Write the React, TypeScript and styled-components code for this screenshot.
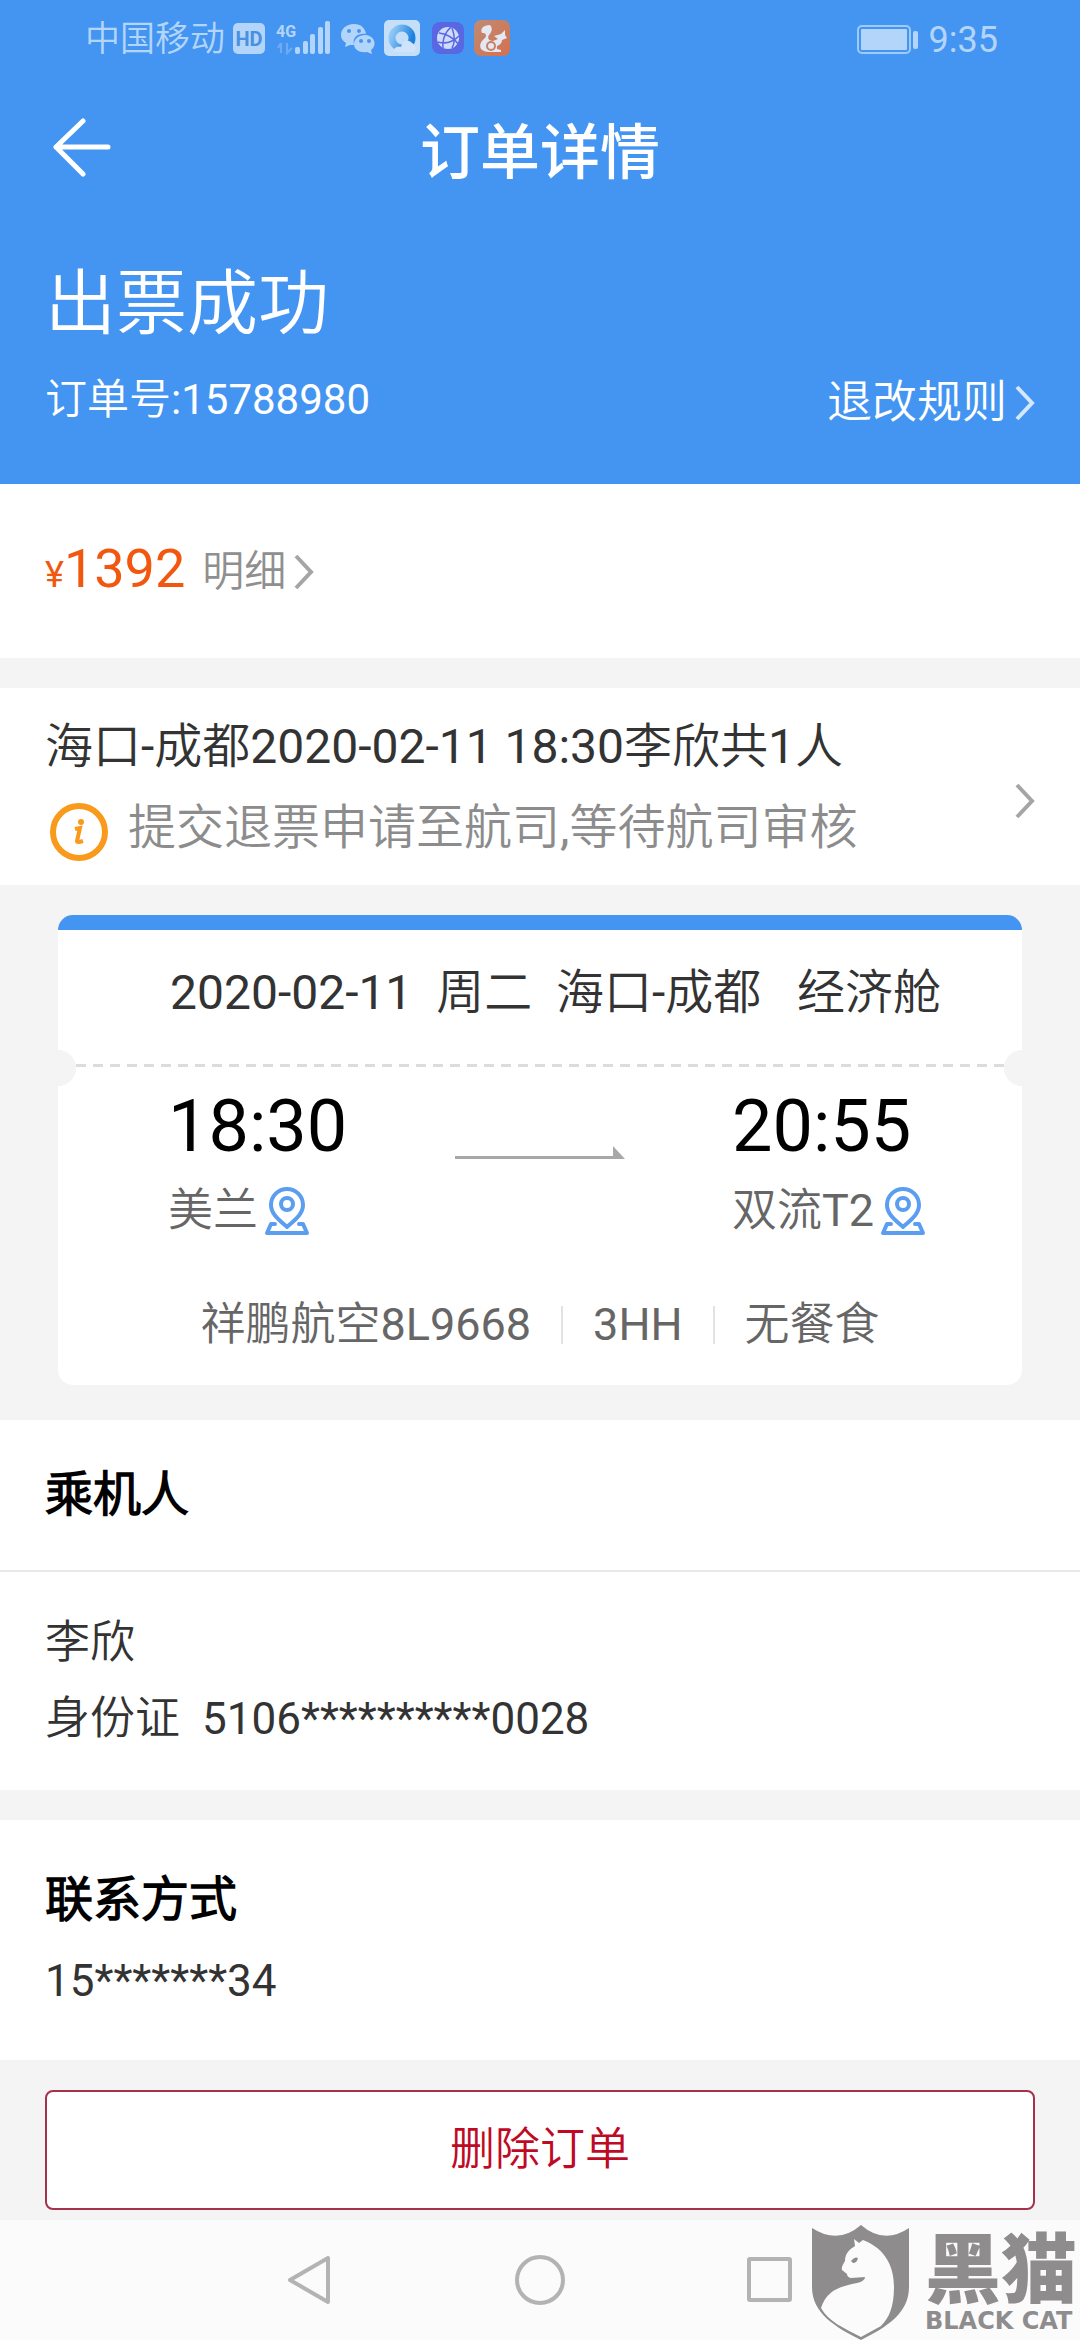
import React from 'react';
import styled, { createGlobalStyle } from 'styled-components';

const Global = createGlobalStyle`
  * { box-sizing: border-box; }
  body {
    margin: 0;
    background: #f4f4f4;
    color: #333;
    font-family: Roboto, "Noto Sans CJK SC DemiLight", "Noto Sans CJK SC", sans-serif;
    font-size: 45px;
    line-height: 60px;
  }
  h1, h2, p { margin: 0; font-weight: 400; }
  button { margin: 0; padding: 0; border: 0; background: none; color: inherit; font: inherit; cursor: pointer; }
  svg { display: block; flex: none; }
`;

const Page = styled.div`
  min-height: 100vh;
  display: flex;
  flex-direction: column;
`;

const Header = styled.header`
  background: #4495f2;
  color: #fff;
  padding-bottom: 48px;
`;

const StatusBar = styled.div`
  display: flex;
  align-items: center;
  justify-content: space-between;
  height: 76px;
  padding: 4px 82px 0 85px;
  color: #b4d5fa;
  font-size: 36px;
  line-height: 40px;
`;

const StatusGroup = styled.div<{ $gap: number }>`
  display: flex;
  align-items: center;
  gap: ${p => p.$gap}px;
`;

const Carrier = styled.span`
  font-size: 35px;
`;

const TitleBar = styled.div`
  display: grid;
  grid-template-columns: 1fr auto 1fr;
  align-items: center;
  padding: 28px 48px 0;
`;

const BackButton = styled.button`
  justify-self: start;
`;

const PageTitle = styled.h1`
  font-family: "Noto Sans CJK SC", sans-serif;
  font-size: 60px;
  font-weight: 500;
  line-height: 88px;
`;

const OrderState = styled.p`
  padding: 62px 45px 0;
  font-size: 71px;
  line-height: 100px;
`;

const OrderRow = styled.div`
  display: flex;
  align-items: flex-start;
  justify-content: space-between;
  padding: 16px 45px 0;
`;

const OrderNumber = styled.span`
  font-size: 42px;
`;

const LinkButton = styled.button<{ $tone?: 'muted' }>`
  display: flex;
  align-items: center;
  gap: 8px;
  color: ${p => (p.$tone ? '#8f8f8f' : '#fff')};
  font-size: ${p => (p.$tone ? 42 : 45)}px;
  line-height: 66px;
`;

const Panel = styled.section`
  background: #fff;
`;

const PricePanel = styled(Panel)`
  display: flex;
  align-items: center;
  gap: 17px;
  height: 174px;
  padding: 2px 45px 0;
  margin-bottom: 30px;
`;

const Price = styled.span`
  color: #f2570f;
  font-size: 54px;
  small { font-size: 36px; }
`;

const NoticePanel = styled(Panel)`
  display: flex;
  align-items: flex-end;
  justify-content: space-between;
  padding: 26px 45px 23px;
  & > svg { margin-bottom: 43px; }
`;

const NoticeText = styled.div`
  display: flex;
  flex-direction: column;
  gap: 14px;
  font-size: 48px;
  line-height: 66px;
`;

const NoticeStatus = styled.div`
  display: flex;
  align-items: flex-end;
  gap: 20px;
  padding-left: 5px;
  color: #8c8c8c;
  p { line-height: 68px; }
`;

const Ticket = styled.article`
  margin: 30px 58px 35px;
  border-top: 15px solid #4495f2;
  border-radius: 15px;
  background: #fff;
  color: #666;
`;

const TicketTitle = styled.h2`
  padding: 30px 112px 0;
  height: 134px;
  color: #333;
  font-size: 48px;
  line-height: 66px;
  white-space: pre;
`;

const Perforation = styled.div`
  display: flex;
  align-items: flex-start;
  justify-content: space-between;
  height: 25px;
`;

const Notch = styled.span<{ $side: 'left' | 'right' }>`
  width: 18px;
  height: 36px;
  margin-top: -14px;
  background: #f4f4f4;
  border-radius: ${p => (p.$side === 'left' ? '0 18px 18px 0' : '18px 0 0 18px')};
`;

const Dashes = styled.span`
  flex: 1;
  height: 3px;
  background: repeating-linear-gradient(90deg, #dcdcdc 0 10px, transparent 10px 17px);
`;

const Route = styled.div`
  display: grid;
  grid-template-columns: 282px 1fr 268px;
  padding: 0 22px 0 110px;
`;

const Stop = styled.div`
  display: flex;
  flex-direction: column;
  gap: 16px;
`;

const StopTime = styled.strong`
  color: #000;
  font-size: 72px;
  font-weight: 400;
  line-height: 76px;
`;

const StopPlace = styled.button`
  display: flex;
  align-items: center;
  gap: 5px;
  white-space: nowrap;
`;

const ArrowCell = styled.div`
  padding: 56px 5px 0;
`;

const FlightInfo = styled.ul`
  display: flex;
  justify-content: center;
  align-items: center;
  margin: 0;
  padding: 52px 0 28px;
  list-style: none;
  line-height: 64px;
`;

const FlightItem = styled.li`
  display: flex;
  align-items: center;
  & + &::before {
    content: '';
    width: 2px;
    height: 38px;
    margin: 0 30px;
    background: #e2e2e2;
  }
`;

const SectionTitle = styled.h2`
  color: #000;
  font-size: 48px;
  font-weight: 700;
  line-height: 66px;
`;

const PassengerHead = styled.div`
  padding: 42px 45px;
  border-bottom: 2px solid #e9e9e9;
`;

const Details = styled.div`
  display: flex;
  flex-direction: column;
  gap: 16px;
  padding: 41px 45px;
`;

const DocumentRow = styled.p`
  display: flex;
  gap: 22px;
`;

const MaskedNumber = styled.span`
  font-size: 44px;
`;

const ContactPanel = styled(Panel)`
  display: flex;
  flex-direction: column;
  gap: 18px;
  margin-top: 30px;
  padding: 47px 45px 49px;
`;

const DeleteButton = styled.button`
  margin: 30px 45px 10px;
  height: 120px;
  border: 2px solid #a3324a;
  border-radius: 8px;
  background: #fff;
  color: #bf0a26;
`;

const NavBar = styled.nav`
  position: relative;
  display: flex;
  justify-content: center;
  align-items: center;
  gap: 180px;
  height: 120px;
  margin-top: auto;
  background: #fbfbfb;
`;

const Watermark = styled.div`
  position: absolute;
  right: 3px;
  bottom: 0;
  display: flex;
  align-items: flex-end;
  gap: 15px;
  color: #8e8c8d;
`;

const BrandText = styled.div`
  display: flex;
  flex-direction: column;
  white-space: nowrap;
`;

const BrandName = styled.span`
  font-family: "Noto Sans CJK SC", sans-serif;
  font-size: 76px;
  line-height: 76px;
  font-weight: 900;
`;

const BrandLatin = styled.span`
  font-family: "DejaVu Sans", sans-serif;
  font-size: 24px;
  line-height: 38px;
  font-weight: 700;
`;

function Chevron({ color }: { color: string }) {
  return (
    <svg width="20" height="36" viewBox="0 0 20 36" fill="none" stroke={color} strokeWidth="4">
      <path d="M2 2L17 18L2 34" />
    </svg>
  );
}

function Pin() {
  return (
    <svg width="47" height="50" viewBox="0 0 47 50" fill="none" stroke="#5b9df0" strokeWidth="4" strokeLinejoin="round" strokeLinecap="round">
      <path d="M24 41C16 34 8 28 8 19A16 16 0 0 1 40 19C40 28 32 34 24 41Z" />
      <circle cx="24" cy="18" r="6" />
      <path d="M12 38H8L4 47H44L40 38H36" />
    </svg>
  );
}

function StatusIcons() {
  return (
    <svg width="282" height="40" viewBox="0 0 282 40" fill="#b4d5fa">
      <defs>
        <linearGradient id="ring" x1="0" y1="0.2" x2="1" y2="0.6">
          <stop offset="0" stopColor="#8fc8f6" />
          <stop offset="1" stopColor="#1c7fe0" />
        </linearGradient>
        <linearGradient id="ucTile" x1="0" y1="0" x2="1" y2="1">
          <stop offset="0" stopColor="#c18a72" />
          <stop offset="1" stopColor="#d3714f" />
        </linearGradient>
      </defs>
      <rect x="0" y="3" width="32" height="31" rx="5" />
      <text x="16" y="26" textAnchor="middle" fontSize="20" fontWeight="700" fill="#4a90e0">HD</text>
      <text x="43" y="17" fontSize="16" fontWeight="700">4G</text>
      <path d="M48 23V33M48 23L45 28M54 23V33L59 28" stroke="#6fabf5" strokeWidth="2" fill="none" />
      <rect x="62" y="27" width="5" height="7" rx="2" />
      <rect x="70" y="21" width="5" height="13" rx="2" />
      <rect x="77" y="14" width="5" height="20" rx="2" />
      <rect x="85" y="7" width="5" height="27" rx="2" />
      <rect x="92" y="1" width="5" height="33" rx="2" />
      <path d="M121 4C113 4 108 9 108 15C108 19 110 21 113 23L112 27L117 25H121C119 16 126 13 133 14C132 8 128 4 121 4Z" />
      <path d="M132 15C126 15 121 19 121 24C121 30 127 33 134 32L139 34L138 30C145 25 141 15 132 15Z" />
      <g fill="#4495f2"><circle cx="116" cy="11" r="2" /><circle cx="126" cy="11" r="2" /><circle cx="128" cy="21" r="2" /><circle cx="136" cy="21" r="2" /></g>
      <rect x="151" y="0" width="36" height="36" rx="5" fill="#c5dff9" />
      <circle cx="169" cy="18" r="10" fill="none" stroke="url(#ring)" strokeWidth="7" />
      <path d="M161 32C160 27 165 26 168 27C169 22 174 19 178 22C180 24 183 25 183 28C183 31 181 32 178 32Z" fill="#cfe3fa" />
      <rect x="199" y="2" width="32" height="32" rx="8" fill="#5a67e3" />
      <circle cx="215" cy="18" r="11" fill="#cfdcfb" />
      <path d="M206 13C214 14 221 18 226 25M218 7C211 13 209 22 210 28M219 8C222 16 222 23 219 28M205 22C212 24 220 22 226 16" stroke="#5a67e3" strokeWidth="1.5" fill="none" />
      <rect x="241" y="0" width="36" height="36" rx="7" fill="url(#ucTile)" />
      <path d="M257 5C250 5 247 9 249 13C253 13 254 15 252 18C248 21 246 25 248 29Q251 32 256 32H268V30L264 29V26C267 25 269 23 269 20L274 18L272 15V10L268 14L261 16L265 19L260 21C256 21 254 18 256 15C259 12 260 8 257 5Z" fill="#e3e8f4" />
      <circle cx="258" cy="26" r="4" fill="none" stroke="#cc7f63" strokeWidth="2" />
    </svg>
  );
}

export default function App() {
  return (
    <Page>
      <Global />
      <Header>
        <StatusBar>
          <StatusGroup $gap={8}>
            <Carrier>中国移动</Carrier>
            <StatusIcons />
          </StatusGroup>
          <StatusGroup $gap={10}>
            <svg width="62" height="30" viewBox="0 0 62 30">
              <rect x="1" y="1" width="52" height="27" rx="4" fill="none" stroke="#9ccbfa" strokeWidth="2" />
              <rect x="4" y="4" width="46" height="21" rx="1" fill="#b4d5fa" />
              <rect x="56" y="6" width="5" height="18" rx="2" fill="#b4d5fa" />
            </svg>
            <span>9:35</span>
          </StatusGroup>
        </StatusBar>
        <TitleBar>
          <BackButton aria-label="返回">
            <svg width="66" height="60" viewBox="0 0 66 60" fill="none" stroke="#fff" strokeWidth="5" strokeLinecap="round" strokeLinejoin="round">
              <path d="M35 3L8 29L35 56M8 29H60" />
            </svg>
          </BackButton>
          <PageTitle>订单详情</PageTitle>
        </TitleBar>
        <OrderState>出票成功</OrderState>
        <OrderRow>
          <OrderNumber>订单号:15788980</OrderNumber>
          <LinkButton>退改规则<Chevron color="#d5e7fc" /></LinkButton>
        </OrderRow>
      </Header>

      <PricePanel>
        <Price><small>¥</small>1392</Price>
        <LinkButton $tone="muted">明细<Chevron color="#a5a5a5" /></LinkButton>
      </PricePanel>

      <NoticePanel>
        <NoticeText>
          <p>海口-成都2020-02-11 18:30李欣共1人</p>
          <NoticeStatus>
            <svg width="58" height="60" viewBox="0 0 58 60" fill="none" stroke="#f99a1c">
              <circle cx="29" cy="30" r="26" strokeWidth="6" />
              <circle cx="31" cy="20" r="3" fill="#f99a1c" stroke="none" />
              <path d="M25 27L30 26L27 39Q27 41 33 39" strokeWidth="4" />
            </svg>
            <p>提交退票申请至航司,等待航司审核</p>
          </NoticeStatus>
        </NoticeText>
        <Chevron color="#a5a5a5" />
      </NoticePanel>

      <Ticket>
        <TicketTitle>{'2020-02-11  周二  海口-成都   经济舱'}</TicketTitle>
        <Perforation>
          <Notch $side="left" />
          <Dashes />
          <Notch $side="right" />
        </Perforation>
        <Route>
          <Stop>
            <StopTime>18:30</StopTime>
            <StopPlace>美兰<Pin /></StopPlace>
          </Stop>
          <ArrowCell>
            <svg width="172" height="15" viewBox="0 0 172 15" fill="#a8a8a8">
              <path d="M0 11H158V1L170 14H0Z" />
            </svg>
          </ArrowCell>
          <Stop>
            <StopTime>20:55</StopTime>
            <StopPlace>双流T2<Pin /></StopPlace>
          </Stop>
        </Route>
        <FlightInfo>
          <FlightItem>祥鹏航空8L9668</FlightItem>
          <FlightItem>3HH</FlightItem>
          <FlightItem>无餐食</FlightItem>
        </FlightInfo>
      </Ticket>

      <Panel>
        <PassengerHead><SectionTitle>乘机人</SectionTitle></PassengerHead>
        <Details>
          <p>李欣</p>
          <DocumentRow>
            <span>身份证</span>
            <MaskedNumber>5106**********0028</MaskedNumber>
          </DocumentRow>
        </Details>
      </Panel>

      <ContactPanel>
        <SectionTitle>联系方式</SectionTitle>
        <MaskedNumber>15*******34</MaskedNumber>
      </ContactPanel>

      <DeleteButton>删除订单</DeleteButton>

      <NavBar>
        <button aria-label="后退">
          <svg width="50" height="50" viewBox="0 0 50 50" fill="none" stroke="#b3b3b3" strokeWidth="4" strokeLinejoin="round">
            <path d="M43 3V47L5 25Z" />
          </svg>
        </button>
        <button aria-label="主屏幕">
          <svg width="50" height="50" viewBox="0 0 50 50" fill="none" stroke="#b3b3b3" strokeWidth="4">
            <circle cx="25" cy="25" r="23" />
          </svg>
        </button>
        <button aria-label="最近任务">
          <svg width="50" height="50" viewBox="0 0 50 50" fill="none" stroke="#b3b3b3" strokeWidth="4">
            <rect x="4" y="4" width="41" height="41" rx="1" />
          </svg>
        </button>
        <Watermark>
          <svg width="98" height="115" viewBox="0 0 98 115" fill="#8e8c8d">
            <path d="M0 3Q26 20 49 0Q72 20 97 3V62C97 88 75 102 49 115C23 102 0 88 0 62Z" />
            <path d="M42 14L47 18L51 15C74 24 82 42 82 62C82 82 77 93 69 101L49 112C32 103 17 97 9 83C15 65 27 62 45 58Q53 56 53 52L39 53Q35 52 35 49L30 45Q29 42 33 36C33 28 38 24 43 21Z" fill="#fbfbfb" />
            <path d="M39 36Q43 31 46 33Q45 38 41 38Z" />
          </svg>
          <BrandText>
            <BrandName>黑猫</BrandName>
            <BrandLatin>BLACK CAT</BrandLatin>
          </BrandText>
        </Watermark>
      </NavBar>
    </Page>
  );
}
